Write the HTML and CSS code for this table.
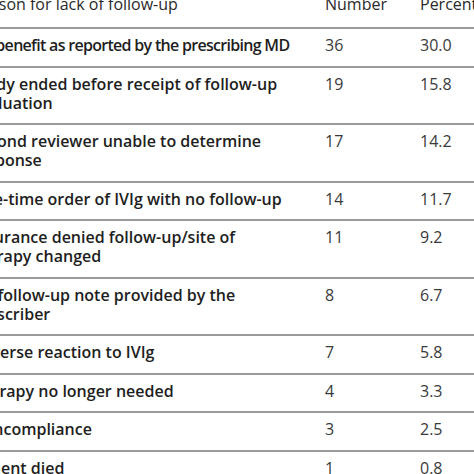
FILE: index.html
```html
<!DOCTYPE html>
<html>
<head>
<meta charset="utf-8">
<link rel="stylesheet" href="styles.css">
</head>
<body>
<div class="frame">
<table class="tbl">
  <colgroup>
    <col class="c1"><col class="c2"><col class="c3">
  </colgroup>
  <thead>
    <tr><th>Reason for lack of follow-up</th><th>Number</th><th>Percent</th></tr>
  </thead>
  <tbody>
    <tr><td class="reason tight">No benefit as reported by the prescribing MD</td><td>36</td><td>30.0</td></tr>
    <tr><td class="reason">Study ended before receipt of follow-up<br>evaluation</td><td>19</td><td>15.8</td></tr>
    <tr><td class="reason">Second reviewer unable to determine<br>response</td><td>17</td><td>14.2</td></tr>
    <tr><td class="reason">One-time order of IVIg with no follow-up</td><td>14</td><td>11.7</td></tr>
    <tr><td class="reason">Insurance denied follow-up/site of<br>therapy changed</td><td>11</td><td>9.2</td></tr>
    <tr><td class="reason">No follow-up note provided by the<br>prescriber</td><td>8</td><td>6.7</td></tr>
    <tr><td class="reason">Adverse reaction to IVIg</td><td>7</td><td>5.8</td></tr>
    <tr><td class="reason">Therapy no longer needed</td><td>4</td><td>3.3</td></tr>
    <tr><td class="reason">Noncompliance</td><td>3</td><td>2.5</td></tr>
    <tr><td class="reason">Patient died</td><td>1</td><td>0.8</td></tr>
  </tbody>
</table>
</div>
</body>
</html>
```
FILE: styles.css
```css
html, body {
  margin: 0;
  padding: 0;
  background: #ffffff;
}
.frame {
  width: 474px;
  height: 474px;
  overflow: hidden;
}
.tbl {
  border-collapse: collapse;
  table-layout: fixed;
  width: 580px;
  margin-left: -29px;
  margin-top: -5px;
  font-family: "Open Sans", "Noto Sans", sans-serif;
  font-size: 16px;
  line-height: 19px;
  color: #333333;
}
.c1 { width: 354px; }
.c2 { width: 95px; }
.c3 { width: 131px; }
.tbl th {
  text-align: left;
  font-weight: 400;
  color: #2a2a2a;
  padding: 0 0 13px 0;
  border-bottom: 2px solid #9a9a9a;
  white-space: nowrap;
}
.tbl td {
  text-align: left;
  vertical-align: top;
  padding: 7px 0 10.5px 0;
  border-bottom: 2px solid #9a9a9a;
  color: #3a3a3a;
  white-space: nowrap;
}
.tbl td.reason {
  font-weight: 600;
  color: #1e1e1e;
}
.tbl td.tight {
  letter-spacing: -0.7px;
}
```
